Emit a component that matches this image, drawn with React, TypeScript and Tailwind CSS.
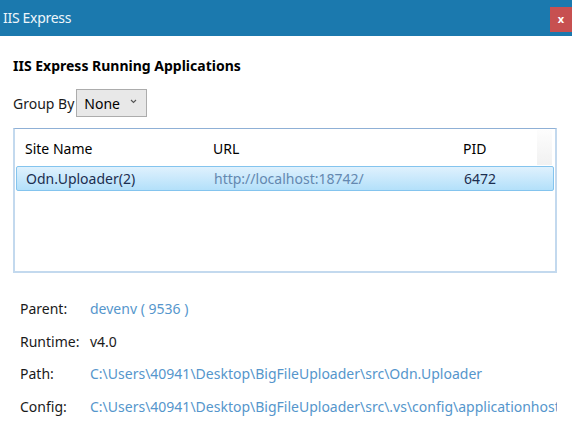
export default function App() {
  return (
    <div className="flex h-[423px] w-[572px] flex-col overflow-hidden bg-white font-['Noto_Sans',sans-serif] text-[14px] text-[#1a1a1a]">
      <div className="flex h-[36px] shrink-0 items-start justify-between bg-[#1b79ae]">
        <span className="mt-[8px] pl-[3px] text-[14px] leading-[20px] tracking-[-0.3px] text-[#eef6fb]">IIS Express</span>
        <button className="mt-[7px] flex h-[25px] w-[22px] items-center justify-center bg-[#c75050] pb-[2px] text-[11px] font-bold leading-none text-white">
          x
        </button>
      </div>

      <div className="flex flex-col px-[13px]">
        <h1 className="mt-[20px] text-[14px] font-bold leading-[19px] text-black">IIS Express Running Applications</h1>

        <div className="mt-[14px] flex items-center">
          <span className="leading-[19px]">Group By</span>
          <div className="ml-[2px] flex h-[28px] w-[71px] items-center border border-[#acacac] bg-[#e8e8e8] pl-[7px] pr-[9px]">
            <span className="leading-[19px] text-black">None</span>
            <svg className="mb-[4px] ml-auto" width="7" height="5" viewBox="0 0 7 5">
              <path d="M1 1 L3.5 3.5 L6 1" fill="none" stroke="#555" strokeWidth="1.1" />
            </svg>
          </div>
        </div>

        <div className="mt-[11px] flex h-[145px] w-[544px] flex-col border-2 border-t-1 border-[#c3d9ee] border-t-[#8fb0d6]">
          <div className="flex h-[37px] items-center pt-[1px]">
            <span className="w-[198px] pl-[10px] text-black">Site Name</span>
            <span className="w-[250px] text-black">URL</span>
            <span className="flex-1 text-black">PID</span>
            <span className="mr-[3px] h-[35px] w-[15px] self-start bg-gradient-to-b from-[#fdfdfd] to-[#f1f1f1]" />
          </div>
          <div className="mx-[1px] flex h-[25px] items-center rounded-[2px] border border-[#84c4ee] bg-gradient-to-b from-[#dff1fd] to-[#b3e0fa]">
            <span className="w-[197px] pl-[9px] text-[#1c2e50]">Odn.Uploader(2)</span>
            <span className="w-[250px] text-[#6488b0]">http://localhost:18742/</span>
            <span className="text-[#1c2e50]">6472</span>
          </div>
        </div>

        <div className="mt-[26px] flex flex-col gap-[13.5px] pl-[7px]">
          {[
            ['Parent:', 'devenv ( 9536 )', true],
            ['Runtime:', 'v4.0', false],
            ['Path:', 'C:\\Users\\40941\\Desktop\\BigFileUploader\\src\\Odn.Uploader', true],
            ['Config:', 'C:\\Users\\40941\\Desktop\\BigFileUploader\\src\\.vs\\config\\applicationhost.config', true],
          ].map(([label, value, link]) => (
            <div key={label as string} className="flex h-[19px] items-center whitespace-nowrap">
              <span className="w-[70px] shrink-0 leading-[19px]">{label}</span>
              <span className={link ? 'w-[467px] overflow-hidden leading-[19px] text-[#5596cc]' : 'leading-[19px] text-[#1a1a1a]'}>{value}</span>
            </div>
          ))}
        </div>
      </div>
    </div>
  )
}
